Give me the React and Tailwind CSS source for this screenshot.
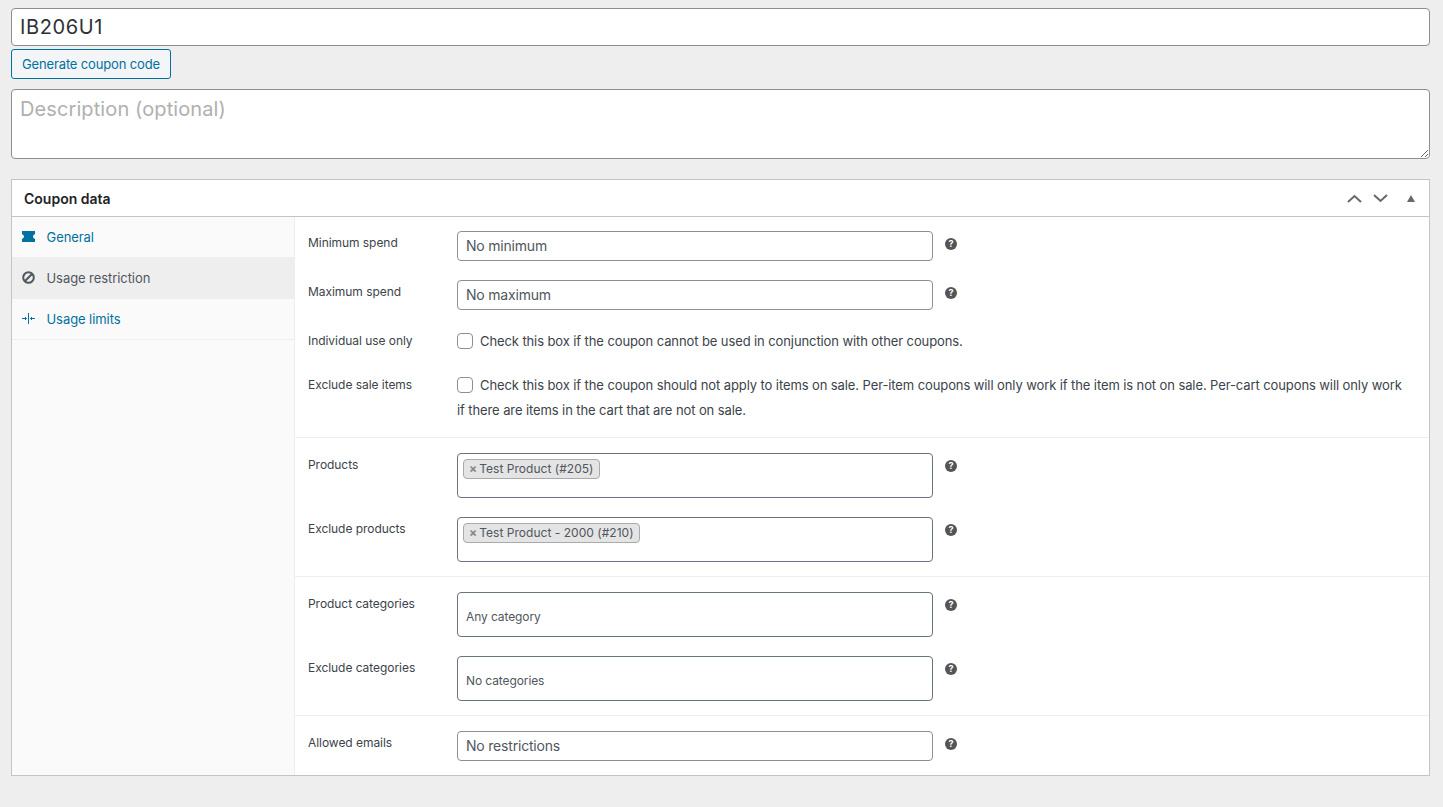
import React from "react";

function Help() {
  return (
    <svg className="ml-3 mt-[7px] shrink-0" width="12" height="12" viewBox="0 0 12 12">
      <circle cx="6" cy="6" r="6" fill="#555" />
      <text x="6" y="9.2" textAnchor="middle" fontSize="9" fontWeight="700" fill="#fff" fontFamily="Inter, sans-serif">?</text>
    </svg>
  );
}

function Label({ children, className = "pt-[3px]" }) {
  return <div className={`w-[149px] shrink-0 text-[12px] leading-[18px] text-[#3c434a] tracking-[-0.05px] ${className}`}>{children}</div>;
}

function TextRow({ label, placeholder, className = "" }) {
  return (
    <div className={`flex ${className}`}>
      <Label>{label}</Label>
      <input
        placeholder={placeholder}
        className="w-[476px] h-[30px] rounded-[4px] border border-[#8c8f94] bg-white pl-2 pr-2 pb-[2px] text-[14px] tracking-[-0.2px] text-[#2c3338] placeholder:text-[#50575e] outline-none"
      />
      <Help />
    </div>
  );
}

function TagRow({ label, tag, placeholder, className = "" }) {
  return (
    <div className={`flex ${className}`}>
      <Label>{label}</Label>
      <div className="w-[476px] h-[45px] rounded-[4px] border border-[#6b7280] bg-white">
        {tag ? (
          <span className="ml-[5px] mt-[5px] inline-flex h-[20px] items-center rounded-[4px] border border-[#aaaaaa] bg-[#e4e4e4] pl-[5px] pr-[5px] text-[12px] leading-none text-[#50575e] tracking-[0.03px]">
            <span className="mr-[2px] text-[12px] font-bold text-[#888]">×</span>
            {tag}
          </span>
        ) : (
          <div className="pl-2 pt-[15px] text-[12px] leading-[18px] text-[#50575e] tracking-[-0.1px]">{placeholder}</div>
        )}
      </div>
      <Help />
    </div>
  );
}

function Check() {
  return <span className="mr-[7px] inline-block h-4 w-4 rounded-[4px] border border-[#8c8f94] bg-white align-[-3px]" />;
}

function Tab({ icon, children, active, last, className }) {
  return (
    <div className={`flex items-center pl-[10px] pt-[2px] text-[13px] tracking-[-0.07px] ${className} ${active ? "bg-[#eeeeee] text-[#50575e]" : "text-[#0071a1]"} ${last ? "border-b border-[#eeeeee]" : ""}`}>
      <span className="-mt-[3px] flex w-[24.5px] justify-start">{icon}</span>
      {children}
    </div>
  );
}

export default function App() {
  return (
    <div className="min-h-[807px] bg-[#eeeeee] pl-[11px] pr-[13px] pt-[8px] font-['Inter',sans-serif]">
      <input
        defaultValue="IB206U1"
        className="block h-[38px] w-full rounded-[4px] border border-[#8c8f94] bg-white px-2 text-[20px] tracking-[0.6px] text-[#2c3338] outline-none"
      />
      <button className="mt-[3px] block h-[30px] w-[160px] rounded-[3px] border border-[#0071a1] bg-[#f3f5f6] pt-[1px] text-[13px] text-[#0071a1] tracking-[-0.15px]">
        Generate coupon code
      </button>
      <textarea
        placeholder="Description (optional)"
        className="mt-[10px] block h-[70px] w-full rounded-[4px] border border-[#8c8f94] bg-white px-2 py-[5px] text-[20px] leading-[28px] tracking-[0.1px] text-[#2c3338] placeholder:text-[#b0b0b0] outline-none"
      />
      <div className="mt-[20px] h-[597px] border border-[#c3c4c7] bg-white">
        <div className="flex h-[37px] items-center justify-between border-b border-[#c3c4c7] pl-3 pr-[14px]">
          <h2 className="text-[14px] font-semibold text-[#1d2327]">Coupon data</h2>
          <div className="flex items-center text-[#646970]">
            <svg width="15" height="9" viewBox="0 0 15 9" fill="none" stroke="#646970" strokeWidth="2">
              <path d="M1 8L7.5 2L14 8" />
            </svg>
            <svg className="ml-[11px]" width="15" height="9" viewBox="0 0 15 9" fill="none" stroke="#646970" strokeWidth="2">
              <path d="M1 1L7.5 7L14 1" />
            </svg>
            <svg className="ml-[19px]" width="8" height="7" viewBox="0 0 8 7" fill="#646970">
              <path d="M4 0L8 7H0Z" />
            </svg>
          </div>
        </div>
        <div className="flex h-[558px]">
          <div className="w-[283px] shrink-0 border-r border-[#eeeeee] bg-[#fafafa]">
            <Tab
              className="h-[40px]"
              icon={
                <svg width="13" height="11" viewBox="0 0 13 11" fill="#0071a1">
                  <path d="M0 0H13V3.2C11.8 3.6 11 4.4 11 5.5S11.8 7.4 13 7.8V11H0V7.8C1.2 7.4 2 6.6 2 5.5S1.2 3.6 0 3.2Z" />
                </svg>
              }
            >
              General
            </Tab>
            <Tab
              active
              className="h-[42px]"
              icon={
                <svg width="13" height="13" viewBox="0 0 13 13" fill="none" stroke="#50575e" strokeWidth="2">
                  <circle cx="6.5" cy="6.5" r="5.3" />
                  <path d="M3 10L10 3" />
                </svg>
              }
            >
              Usage restriction
            </Tab>
            <Tab
              last
              className="h-[41px]"
              icon={
                <svg width="13" height="11" viewBox="0 0 13 11" fill="none" stroke="#0071a1" strokeWidth="1">
                  <path d="M6.5 0V11" />
                  <path d="M0 5.5H4.5M3 4L4.5 5.5L3 7" />
                  <path d="M13 5.5H8.5M10 4L8.5 5.5L10 7" />
                </svg>
              }
            >
              Usage limits
            </Tab>
          </div>
          <div className="flex-1">
            <div className="border-b border-[#eeeeee] pb-[14px] pl-[13px] pt-[14px]">
              <TextRow label="Minimum spend" placeholder="No minimum" className="mb-[19px]" />
              <TextRow label="Maximum spend" placeholder="No maximum" className="mb-[19px]" />
              <div className="mb-[20px] flex h-[24px]">
                <Label className="pt-[3px]">Individual use only</Label>
                <div className="whitespace-nowrap text-[13px] leading-[24px] tracking-[-0.1px] text-[#3c434a]">
                  <Check />
                  Check this box if the coupon cannot be used in conjunction with other coupons.
                </div>
              </div>
              <div className="flex">
                <Label className="pt-[3px]">Exclude sale items</Label>
                <div className="whitespace-nowrap text-[13px] leading-[25px] tracking-[-0.1px] text-[#3c434a]">
                  <Check />
                  Check this box if the coupon should not apply to items on sale. Per-item coupons will only work if the item is not on sale. Per-cart coupons will only work
                  <br />
                  if there are items in the cart that are not on sale.
                </div>
              </div>
            </div>
            <div className="border-b border-[#eeeeee] pb-[14px] pl-[13px] pt-[15px]">
              <TagRow label="Products" tag="Test Product (#205)" className="mb-[19px]" />
              <TagRow label="Exclude products" tag="Test Product - 2000 (#210)" />
            </div>
            <div className="border-b border-[#eeeeee] pb-[14px] pl-[13px] pt-[15px]">
              <TagRow label="Product categories" placeholder="Any category" className="mb-[19px]" />
              <TagRow label="Exclude categories" placeholder="No categories" />
            </div>
            <div className="pl-[13px] pt-[15px]">
              <TextRow label="Allowed emails" placeholder="No restrictions" />
            </div>
          </div>
        </div>
      </div>
    </div>
  );
}
